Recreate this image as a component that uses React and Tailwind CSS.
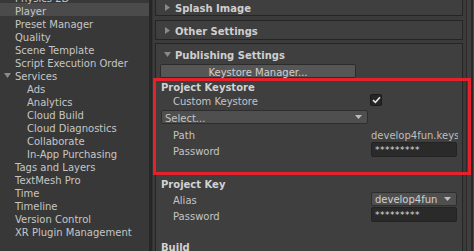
import React from 'react';

const font = { fontFamily: '"DejaVu Sans", "Liberation Sans", sans-serif' };

const navItems = [
  { label: 'Physics 2D', level: 0 },
  { label: 'Player', level: 0, active: true },
  { label: 'Preset Manager', level: 0 },
  { label: 'Quality', level: 0 },
  { label: 'Scene Template', level: 0 },
  { label: 'Script Execution Order', level: 0 },
  { label: 'Services', level: 0, open: true },
  { label: 'Ads', level: 1 },
  { label: 'Analytics', level: 1 },
  { label: 'Cloud Build', level: 1 },
  { label: 'Cloud Diagnostics', level: 1 },
  { label: 'Collaborate', level: 1 },
  { label: 'In-App Purchasing', level: 1 },
  { label: 'Tags and Layers', level: 0 },
  { label: 'TextMesh Pro', level: 0 },
  { label: 'Time', level: 0 },
  { label: 'Timeline', level: 0 },
  { label: 'Version Control', level: 0 },
  { label: 'XR Plugin Management', level: 0 },
];

const Caret = ({ down }) => (
  <svg width="7" height="7" viewBox="0 0 7 7" className="shrink-0">
    {down ? <path d="M0 1 L7 1 L3.5 6 Z" fill="#8a8a8a" /> : <path d="M1 0 L6 3.5 L1 7 Z" fill="#8a8a8a" />}
  </svg>
);

const Sidebar = () => (
  <div className="w-[149px] shrink-0 bg-[#383838] -mt-[10px] text-[10px] text-[#c6c6c6]">
    {navItems.map((it) => (
      <div
        key={it.label}
        className={`h-[13px] pt-[3px] flex items-center whitespace-nowrap ${it.active ? 'bg-[#4b4b4b]' : ''} ${it.level ? 'pl-[27px]' : it.open ? 'pl-[4px]' : 'pl-[15px]'}`}
      >
        {it.open && <span className="mr-[4px] -mt-[2px]"><Caret down /></span>}
        {it.label}
      </div>
    ))}
  </div>
);

const Header = ({ label, open }) => (
  <div className="flex items-center gap-[4px] pl-[8px] pt-[3px] font-bold text-[10px] text-[#cfcfcf]">
    <span className="-mt-[2px]"><Caret down={open} /></span>
    {label}
  </div>
);

const Stars = () => <span className="tracking-[0.5px] text-[9px] pt-[3px]">*********</span>;

const Arrow = () => (
  <svg width="7" height="4" viewBox="0 0 7 4"><path d="M0 0 L7 0 L3.5 4 Z" fill="#bdbdbd" /></svg>
);

const App = () => (
  <div className="w-[474px] h-[251px] overflow-hidden flex bg-[#3e3e3e]" style={font}>
    <Sidebar />
    <div className="w-[4px] shrink-0 flex">
      <div className="w-[3px] bg-[#262626]" />
      <div className="w-[1px] bg-[#333333]" />
    </div>
    <div className="relative flex-1 flex bg-[#3b3b3b]">
      <div className="w-[310px] shrink-0 pl-[2px] flex flex-col">
        <div className="h-[18px] -mt-[2px] border border-[#252525] bg-[#3f3f3f] flex items-center">
          <Header label="Splash Image" />
        </div>
        <div className="h-[21px] mt-[4px] border border-[#252525] bg-[#3f3f3f] flex items-center">
          <Header label="Other Settings" />
        </div>
        <div className="mt-[3px] flex-1 border border-[#252525] border-b-0 bg-[#3f3f3f] text-[10px] text-[#c4c4c4]">
          <div className="h-[19px] flex items-center">
            <Header label="Publishing Settings" open />
          </div>
          <div className="ml-[4px] mt-[1px] w-[196px] h-[14px] pt-[2px] rounded-[2px] bg-[#565656] border border-[#2c2c2c] flex items-center justify-center text-[#d0d0d0]">
            Keystore Manager...
          </div>
          <div className="h-[16px] pt-[3px] pl-[5px] flex items-center font-bold text-[#d2d2d2]">Project Keystore</div>
          <div className="h-[12px] pl-[17px] pr-[80px] flex items-center justify-between">
            <span className="pt-[3px]">Custom Keystore</span>
            <span className="w-[12px] h-[12px] rounded-[2px] bg-[#262626] border border-[#1b1b1b] flex items-center justify-center">
              <svg width="9" height="8" viewBox="0 0 9 8">
                <path d="M1 4.2 L3.4 6.4 L8 1.2" stroke="#e4e4e4" strokeWidth="1.6" fill="none" />
              </svg>
            </span>
          </div>
          <div className="ml-[5px] mt-[4px] w-[207px] h-[14px] rounded-[2px] bg-[#4f4f4f] border border-[#2e2e2e] flex items-center justify-between pl-[3px] pr-[5px]">
            <span className="pt-[2px]">Select...</span>
            <Arrow />
          </div>
          <div className="h-[17px] pt-[3px] mt-[1px] pl-[17px] flex items-center">
            <span className="w-[198px]">Path</span>
            <span className="w-[87px] overflow-hidden whitespace-nowrap text-[#bdbdbd]">develop4fun.keystore</span>
          </div>
          <div className="h-[15px] pl-[17px] flex items-center">
            <span className="w-[198px] pt-[3px]">Password</span>
            <span className="w-[86px] h-[15px] rounded-[2px] bg-[#2a2a2a] border border-[#232323] flex items-center pl-[3px] text-[#dedede]"><Stars /></span>
          </div>
          <div className="h-[18px]" />
          <div className="h-[16px] pt-[3px] pl-[5px] flex items-center font-bold text-[#d2d2d2]">Project Key</div>
          <div className="h-[15px] pl-[17px] flex items-center">
            <span className="w-[198px] pt-[3px]">Alias</span>
            <span className="w-[86px] h-[14px] rounded-[2px] bg-[#4f4f4f] border border-[#2e2e2e] flex items-center justify-between pl-[3px] pr-[5px] text-[#d0d0d0]">
              <span className="pt-[2px]">develop4fun</span>
              <Arrow />
            </span>
          </div>
          <div className="h-[15px] mt-[1px] pl-[17px] flex items-center">
            <span className="w-[198px] pt-[3px]">Password</span>
            <span className="w-[86px] h-[15px] rounded-[2px] bg-[#2a2a2a] border border-[#232323] flex items-center pl-[3px] text-[#dedede]"><Stars /></span>
          </div>
          <div className="h-[17px]" />
          <div className="h-[14px] pt-[3px] pl-[5px] flex items-center font-bold text-[#d2d2d2]">Build</div>
        </div>
      </div>
      <div className="w-[3px] shrink-0" />
      <div className="w-[1px] shrink-0 bg-[#2a2a2a]" />
      <div className="w-[4px] shrink-0 bg-[#3f3f3f]" />
      <div className="w-[2px] shrink-0 bg-[#2a2a2a]" />
      <div className="flex-1 bg-[#474747]" />
      <div className="absolute left-0 top-[78px] w-[318px] h-[97px] border-[3px] border-[#e3222b] pointer-events-none" />
    </div>
  </div>
);

export default App;
